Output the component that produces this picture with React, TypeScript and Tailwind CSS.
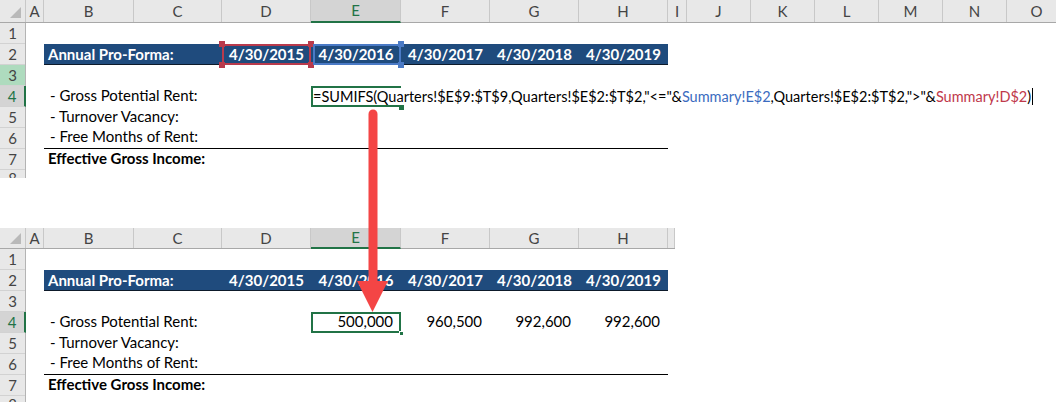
import React from "react";

type Col = { l: string; w: string };

const TOP_COLS: Col[] = [
  { l: "A", w: "w-[18px]" },
  { l: "B", w: "w-[90px]" },
  { l: "C", w: "w-[88px]" },
  { l: "D", w: "w-[89px]" },
  { l: "E", w: "w-[90px]" },
  { l: "F", w: "w-[89px]" },
  { l: "G", w: "w-[89px]" },
  { l: "H", w: "w-[89px]" },
  { l: "I", w: "w-[19px]" },
  { l: "J", w: "w-[64px]" },
  { l: "K", w: "w-[64px]" },
  { l: "L", w: "w-[64px]" },
  { l: "M", w: "w-[64px]" },
  { l: "N", w: "w-[64px]" },
  { l: "O", w: "w-[60px]" },
];

const BOTTOM_COLS: Col[] = [
  { l: "A", w: "w-[18px]" },
  { l: "B", w: "w-[90px]" },
  { l: "C", w: "w-[88px]" },
  { l: "D", w: "w-[89px]" },
  { l: "E", w: "w-[90px]" },
  { l: "F", w: "w-[89px]" },
  { l: "G", w: "w-[89px]" },
  { l: "H", w: "w-[89px]" },
  { l: "", w: "w-[7px]" },
];

const FONT = "font-['Lato','Open_Sans',sans-serif]";

function HeaderRow({ cols, tall }: { cols: Col[]; tall: boolean }) {
  return (
    <div
      className={`flex ${tall ? "h-[23px]" : "h-[21px]"} bg-[#e8e8e8] border-b border-[#a8a8a8]`}
    >
      <div className="relative w-[26px] shrink-0 border-r border-[#c8c8c8]">
        <div className="absolute right-[4px] bottom-[4px] w-0 h-0 border-l-[11px] border-l-transparent border-b-[11px] border-b-[#b9b9b9]" />
      </div>
      {cols.map((c) => {
        const sel = c.l === "E";
        return (
          <div
            key={c.l + c.w}
            className={`${c.w} shrink-0 flex items-center justify-center text-[15px] ${
              sel
                ? "bg-[#d4d4d4] text-[#217346] border-b-2 border-b-[#217346] -mb-px"
                : "text-[#444]"
            } border-r border-[#c8c8c8]`}
          >
            {c.l}
          </div>
        );
      })}
    </div>
  );
}

function RowNums({ green3 }: { green3: boolean }) {
  const nums = [1, 2, 3, 4, 5, 6, 7];
  return (
    <div className="w-[26px] shrink-0 flex flex-col bg-[#e8e8e8] border-r border-[#b4b4b4]">
      {nums.map((n) => {
        const sel = n === 4;
        const g = green3 && n === 3;
        return (
          <div
            key={n}
            className={`h-[21px] shrink-0 flex items-center justify-center text-[15px] border-b border-[#d2d2d2] ${
              sel
                ? "bg-[#d4d4d4] text-[#217346] border-r-2 border-r-[#217346] -mr-px"
                : g
                ? "bg-[#aedbbe] text-[#444]"
                : "text-[#444]"
            }`}
          >
            {n}
          </div>
        );
      })}
      <div className="flex-1 flex justify-center text-[15px] text-[#444] overflow-hidden leading-none pt-[1px]">
        8
      </div>
    </div>
  );
}

function Handle({ pos, color }: { pos: string; color: string }) {
  return <div className={`absolute w-[6px] h-[6px] ${pos} ${color}`} />;
}

function Band({ highlight }: { highlight: boolean }) {
  const dates = ["4/30/2015", "4/30/2016", "4/30/2017", "4/30/2018", "4/30/2019"];
  const widths = ["w-[89px]", "w-[90px]", "w-[89px]", "w-[89px]", "w-[89px]"];
  return (
    <div className="flex h-[21px]">
      <div className="w-[18px] shrink-0" />
      <div className="flex w-[624px] shrink-0 bg-[#1f4b7d] border-b border-[#0d1a2a] text-white font-bold text-[15px]">
        <div className="w-[178px] shrink-0 pl-[4px] flex items-center">Annual Pro-Forma:</div>
        {dates.map((d, i) => (
          <div
            key={d}
            className={`${widths[i]} shrink-0 relative flex items-center justify-center`}
          >
            {d}
            {highlight && i === 0 && (
              <>
                <div className="absolute inset-0 -bottom-px border-2 border-[#b93a4c]" />
                <Handle pos="-left-[3px] -top-[3px]" color="bg-[#b93a4c]" />
                <Handle pos="-right-[3px] -top-[3px]" color="bg-[#b93a4c]" />
                <Handle pos="-left-[3px] -bottom-[4px]" color="bg-[#b93a4c]" />
                <Handle pos="-right-[3px] -bottom-[4px]" color="bg-[#b93a4c]" />
              </>
            )}
            {highlight && i === 1 && (
              <>
                <div className="absolute left-[2px] right-0 top-0 -bottom-px border-2 border-[#4a7ac6]" />
                <Handle pos="-right-[3px] -top-[3px]" color="bg-[#4a7ac6]" />
                <Handle pos="-right-[3px] -bottom-[4px]" color="bg-[#4a7ac6]" />
              </>
            )}
          </div>
        ))}
      </div>
    </div>
  );
}

function LabelRow({
  label,
  bold,
  underline,
  children,
}: {
  label?: string;
  bold?: boolean;
  underline?: boolean;
  children?: React.ReactNode;
}) {
  return (
    <div className="flex h-[21px]">
      <div className="w-[18px] shrink-0" />
      <div
        className={`flex w-[624px] shrink-0 ${underline ? "border-b border-black" : ""}`}
      >
        <div
          className={`w-[178px] shrink-0 flex items-end pb-[1px] text-[15px] text-black whitespace-nowrap ${
            bold ? "font-bold pl-[4px]" : "pl-[6px]"
          }`}
        >
          {label}
        </div>
        {children}
      </div>
    </div>
  );
}

function Formula() {
  return (
    <div className="relative w-[90px] h-full shrink-0">
      <div className="absolute inset-0 border-2 border-r-0 border-[#217346]" />
      <div className="absolute right-[-3px] bottom-[-3px] w-[5px] h-[5px] bg-[#217346]" />
      <div className="absolute left-[2px] top-[2px] bottom-[2px] flex items-center whitespace-nowrap text-[14.5px] text-black bg-white pr-[1px]">
        <span>=SUMIFS(Quarters!$E$9:$T$9,Quarters!$E$2:$T$2,"&lt;="&amp;</span>
        <span className="text-[#3b6cc0]">Summary!E$2</span>
        <span>,Quarters!$E$2:$T$2,"&gt;"&amp;</span>
        <span className="text-[#c0394b]">Summary!D$2</span>
        <span>)</span>
        <span className="ml-[1px] w-px h-[17px] bg-black" />
      </div>
    </div>
  );
}

function Num({ v, w, active }: { v: string; w: string; active?: boolean }) {
  return (
    <div
      className={`relative ${w} h-full shrink-0 flex items-end justify-end pr-[8px] pb-[1px] text-[15px] text-black`}
    >
      {active && (
        <>
          <div className="absolute inset-0 border-2 border-[#217346]" />
          <div className="absolute right-[-3px] bottom-[-3px] w-[5px] h-[5px] bg-[#217346] border border-white" />
        </>
      )}
      <span className="relative">{v}</span>
    </div>
  );
}

function Body({ top }: { top: boolean }) {
  return (
    <div className="flex-1 flex flex-col">
      <div className="h-[21px]" />
      <Band highlight={top} />
      <div className="h-[21px]" />
      <LabelRow label="- Gross Potential Rent:">
        <div className="w-[89px] shrink-0" />
        {top ? (
          <Formula />
        ) : (
          <>
            <Num v="500,000" w="w-[90px]" active />
            <Num v="960,500" w="w-[89px]" />
            <Num v="992,600" w="w-[89px]" />
            <Num v="992,600" w="w-[89px]" />
          </>
        )}
      </LabelRow>
      <LabelRow label="- Turnover Vacancy:" />
      <LabelRow label="- Free Months of Rent:" underline />
      <LabelRow label="Effective Gross Income:" bold />
    </div>
  );
}

function Sheet({ top }: { top: boolean }) {
  return (
    <div className={`flex flex-col ${top ? "w-[1056px] h-[178px]" : "w-[675px] h-[174px]"} overflow-hidden`}>
      <HeaderRow cols={top ? TOP_COLS : BOTTOM_COLS} tall={top} />
      <div className="flex flex-1">
        <RowNums green3={top} />
        <Body top={top} />
      </div>
    </div>
  );
}

export default function App() {
  return (
    <div className={`relative w-[1056px] h-[402px] overflow-hidden bg-white ${FONT}`}>
      <Sheet top />
      <div className="h-[50px]" />
      <Sheet top={false} />
      <svg
        className="absolute left-0 top-0 pointer-events-none"
        width="1056"
        height="402"
        viewBox="0 0 1056 402"
      >
        <line x1="373" y1="114" x2="373" y2="284" stroke="#f44545" strokeWidth="9" strokeLinecap="round" />
        <polygon points="357,281 388,281 372.5,312" fill="#f44545" />
      </svg>
    </div>
  );
}
